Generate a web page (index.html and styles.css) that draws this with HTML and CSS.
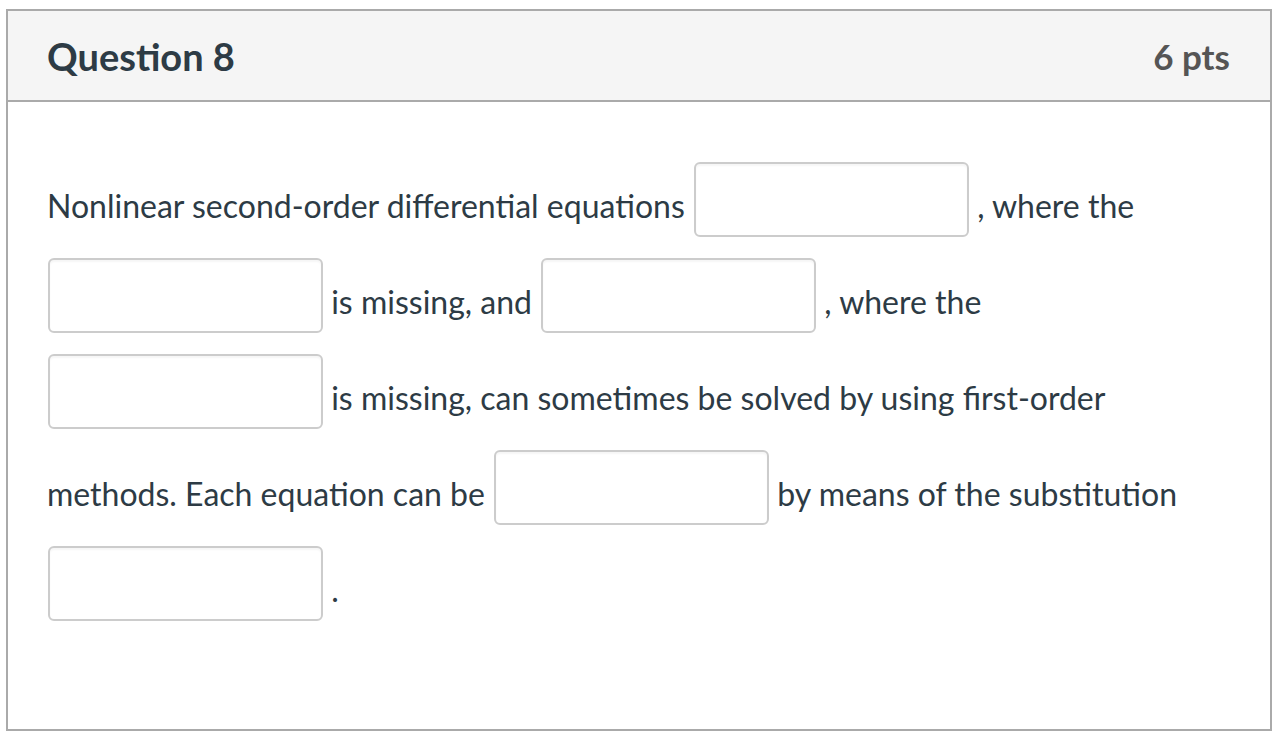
FILE: index.html
```html
<!DOCTYPE html>
<html lang="en">
<head>
<meta charset="utf-8">
<title>Question 8</title>
<link rel="stylesheet" href="styles.css">
</head>
<body>
<div class="question">
  <div class="question-header">
    <h2 class="question-title">Question 8</h2>
    <span class="question-points">6 pts</span>
  </div>
  <div class="question-body">
    <p class="question-text">Nonlinear second-order differential equations <span class="blank"></span> , where the <span class="blank"></span> is missing, and <span class="blank"></span> , where the <span class="blank"></span> is missing, can sometimes be solved by using first-order methods. Each equation can be <span class="blank"></span> by means of the substitution <span class="blank"></span> .</p>
  </div>
</div>
</body>
</html>
```

FILE: styles.css
```css
html, body {
  margin: 0;
  padding: 0;
  background: #ffffff;
}

body {
  font-family: Lato, "Open Sans", sans-serif;
  color: #2d3b45;
}

.question {
  box-sizing: border-box;
  width: 1266px;
  height: 722px;
  margin: 9px 0 0 6px;
  border: 2px solid #aaaaaa;
}

.question-header {
  box-sizing: border-box;
  height: 91px;
  background: #f5f5f5;
  border-bottom: 2px solid #aaaaaa;
  display: flex;
  align-items: center;
  justify-content: space-between;
  padding: 0 40px 0 39px;
}

.question-title {
  margin: 0;
  font-size: 38px;
  font-weight: 700;
  color: #2d3b45;
}

.question-points {
  font-size: 35px;
  font-weight: 700;
  color: #555555;
}

.question-body {
  padding: 49px 39px 0 39px;
}

.question-text {
  margin: 0;
  font-size: 32px;
  line-height: 32px;
}

.blank {
  display: inline-block;
  box-sizing: border-box;
  width: 275px;
  height: 75px;
  margin: 11px 0 10px 1px;
  vertical-align: -29px;
  border: 2px solid #cccccc;
  border-radius: 6px;
  background: #ffffff;
  box-shadow: inset 0 2px 2px rgba(0, 0, 0, 0.04);
}
```
